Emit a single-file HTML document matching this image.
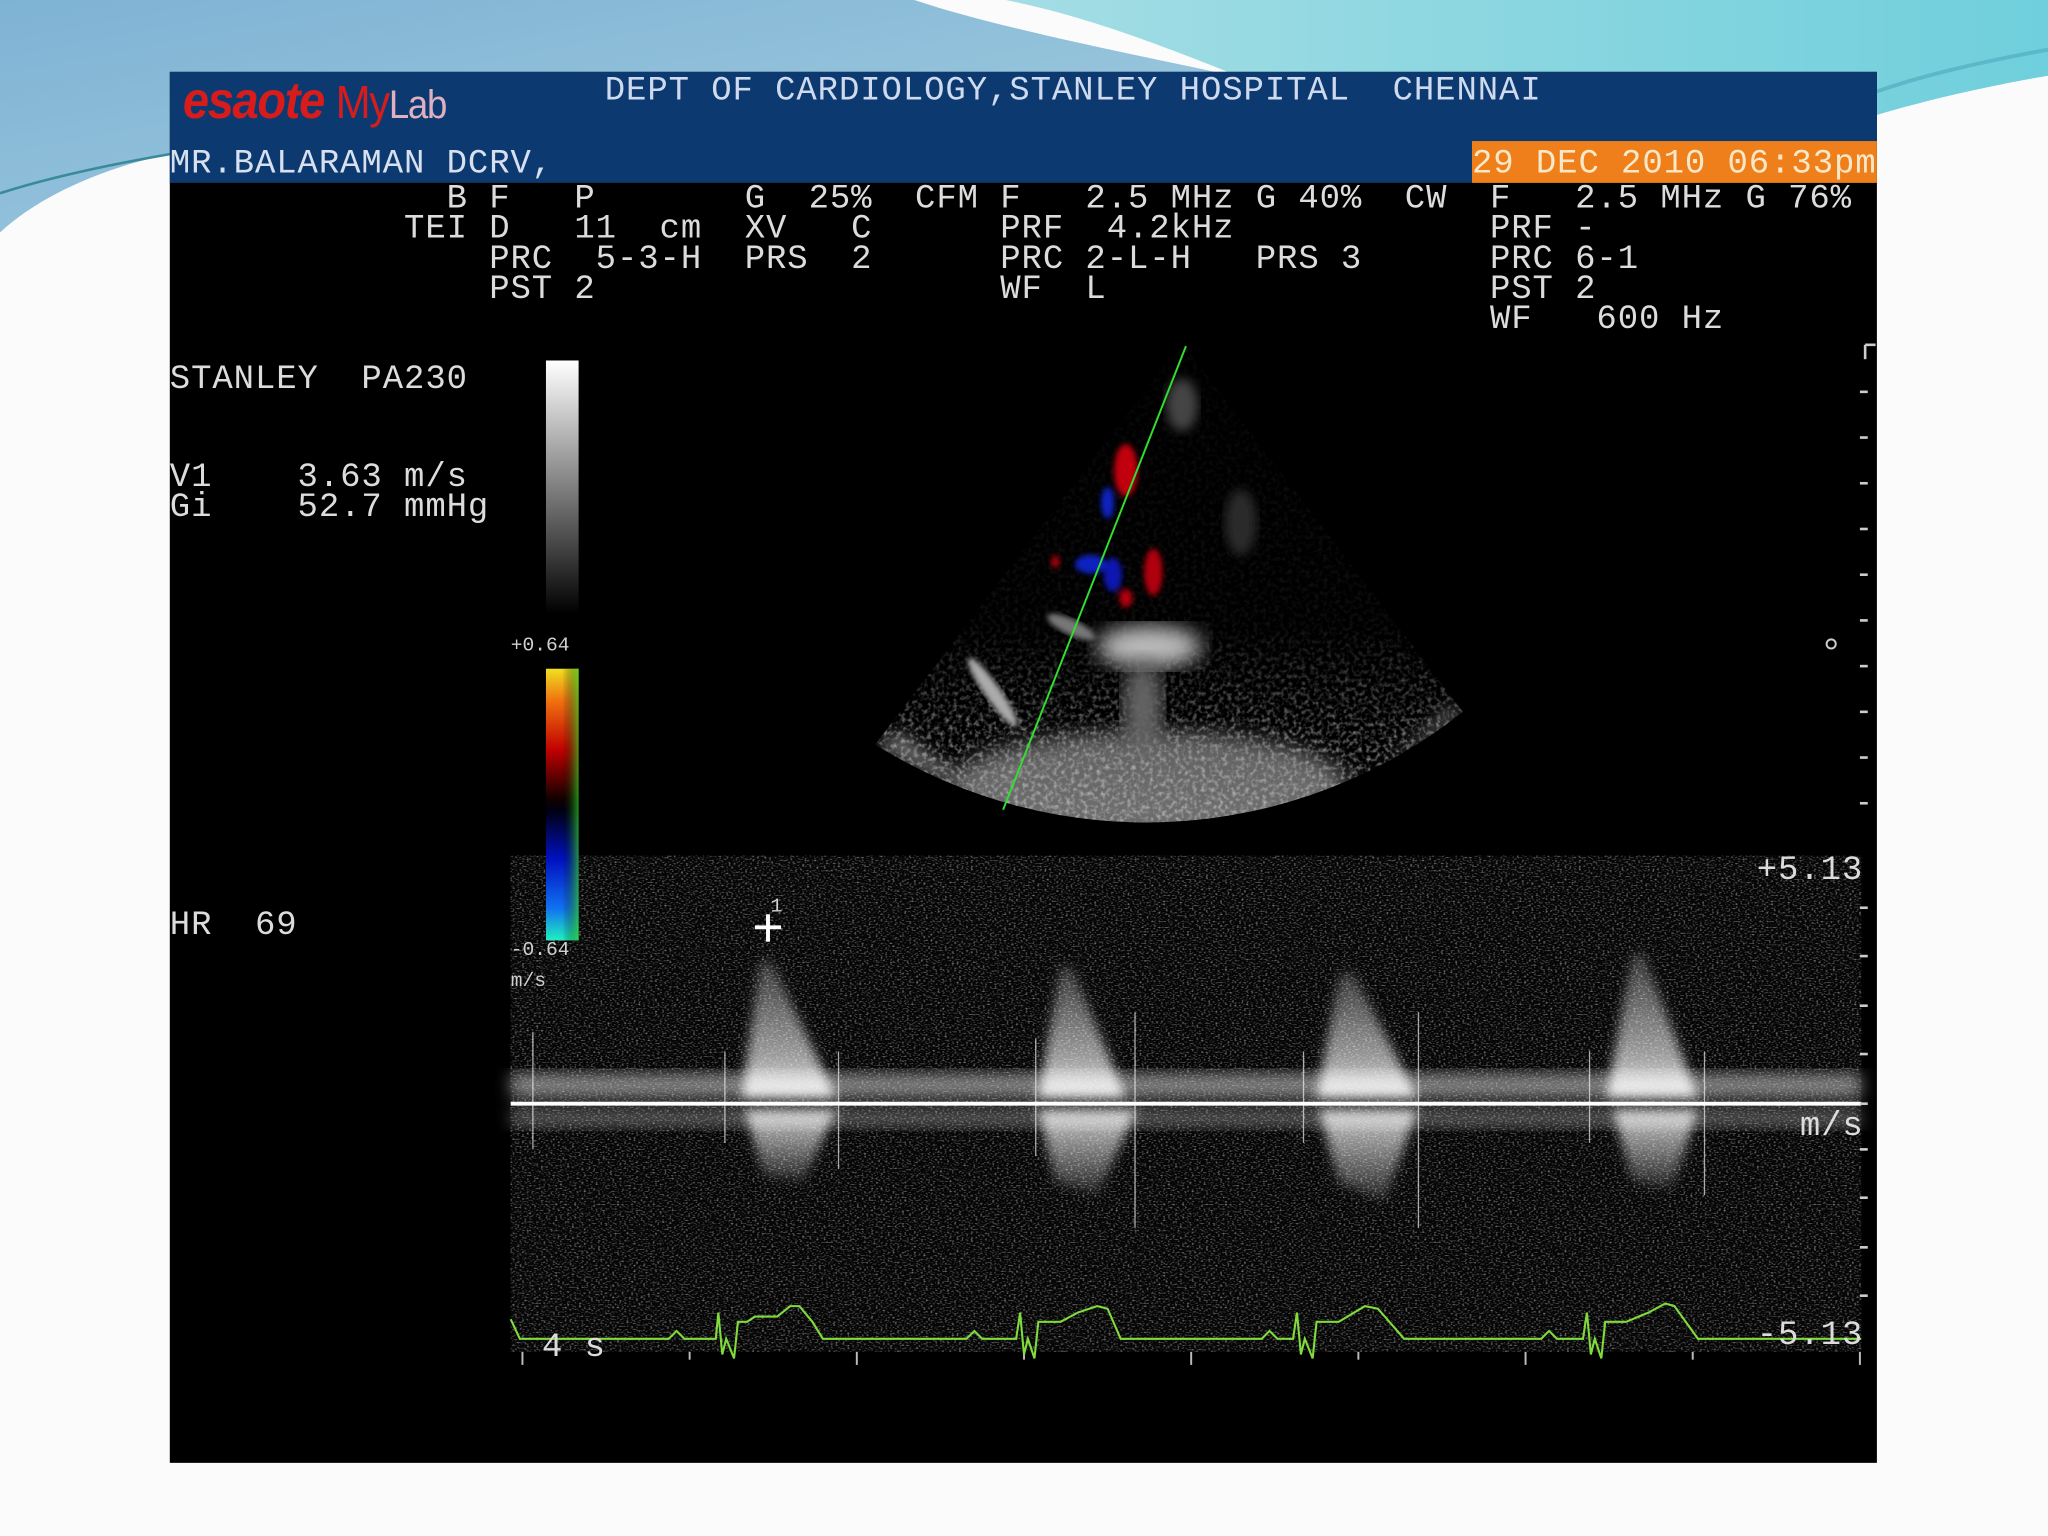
<!DOCTYPE html>
<html><head><meta charset="utf-8">
<style>
html,body{margin:0;padding:0;background:#fbfbfb;overflow:hidden}
#w{position:absolute;left:0;top:0;width:1568px;height:1176px;transform:scale(1.306122);transform-origin:0 0}
.t{position:absolute;font-family:"Liberation Mono",monospace;font-size:26px;letter-spacing:0.7px;color:#dcdcdc;white-space:pre;line-height:23px;margin:0}
.s{position:absolute;font-family:"Liberation Mono",monospace;font-size:15px;color:#d0d0d0;white-space:pre}
</style></head><body>
<div id="w">
<svg width="1568" height="1176" style="position:absolute;left:0;top:0">
<defs>
<linearGradient id="bl" x1="0" y1="0" x2="1" y2="1"><stop offset="0" stop-color="#7fb3d4"/><stop offset="1" stop-color="#a2cde0"/></linearGradient>
<linearGradient id="cy" x1="0" y1="0" x2="1" y2="0"><stop offset="0" stop-color="#a4dde4"/><stop offset="1" stop-color="#6fcfdc"/></linearGradient>
<linearGradient id="gb" x1="0" y1="0" x2="0" y2="1"><stop offset="0" stop-color="#fff"/><stop offset="1" stop-color="#000"/></linearGradient>
<linearGradient id="cb" x1="0" y1="0" x2="0" y2="1">
<stop offset="0" stop-color="#f0e020"/><stop offset="0.12" stop-color="#f07010"/><stop offset="0.3" stop-color="#c00000"/><stop offset="0.48" stop-color="#100000"/><stop offset="0.52" stop-color="#000010"/><stop offset="0.7" stop-color="#0010c0"/><stop offset="0.88" stop-color="#1070f0"/><stop offset="1" stop-color="#20f0c0"/></linearGradient>
<linearGradient id="cbg" x1="0" y1="0" x2="1" y2="0"><stop offset="0.5" stop-color="#000" stop-opacity="0"/><stop offset="1" stop-color="#30d020" stop-opacity="0.7"/></linearGradient>
<filter id="nz" x="0" y="0" width="100%" height="100%">
<feTurbulence type="fractalNoise" baseFrequency="0.55 0.9" numOctaves="1" seed="3"/>
<feColorMatrix type="matrix" values="0 0 0 0 0.75  0 0 0 0 0.75  0 0 0 0 0.75  0 0 0 2.2 -1.1"/>
</filter>
<filter id="nz2" x="0" y="0" width="100%" height="100%">
<feTurbulence type="fractalNoise" baseFrequency="0.3" numOctaves="2" seed="7"/>
<feColorMatrix type="matrix" values="0 0 0 0 0.85  0 0 0 0 0.85  0 0 0 0 0.85  0 0 0 2.5 -1.1"/>
</filter>
<filter id="b4"><feGaussianBlur stdDeviation="4"/></filter>
<filter id="b6"><feGaussianBlur stdDeviation="6"/></filter>
<filter id="b8"><feGaussianBlur stdDeviation="8"/></filter>
<filter id="b2"><feGaussianBlur stdDeviation="2"/></filter>
<clipPath id="sec"><path d="M905,262 L670,570 A390,390 0 0 0 1120,545 Z"/></clipPath>
<linearGradient id="mg" x1="0" y1="0" x2="0" y2="1"><stop offset="0" stop-color="#fff" stop-opacity="0.05"/><stop offset="0.55" stop-color="#fff" stop-opacity="0.12"/><stop offset="0.75" stop-color="#fff" stop-opacity="0.8"/><stop offset="1" stop-color="#fff" stop-opacity="1"/></linearGradient>
<mask id="sm"><rect x="660" y="260" width="470" height="400" fill="url(#mg)"/></mask>
<linearGradient id="pk" x1="0" y1="0" x2="0" y2="1"><stop offset="0" stop-color="#fff" stop-opacity="0.2"/><stop offset="0.7" stop-color="#fff" stop-opacity="0.6"/><stop offset="1" stop-color="#fff" stop-opacity="0.9"/></linearGradient>
<linearGradient id="pkd" x1="0" y1="0" x2="0" y2="1"><stop offset="0" stop-color="#fff" stop-opacity="0.8"/><stop offset="1" stop-color="#fff" stop-opacity="0.1"/></linearGradient>
</defs>
<path d="M0,0 L700,0 C760,20 850,38 930,55 L130,55 L130,118 C80,128 30,150 0,178 Z" fill="url(#bl)"/>
<path d="M770,0 L1568,0 L1568,58 C1520,66 1470,78 1437,88 L1437,55 L940,55 C890,35 830,12 770,0 Z" fill="url(#cy)"/>
<path d="M0,148 C40,135 90,125 130,118" stroke="#3a8a9a" stroke-width="2" fill="none"/>
<path d="M1437,70 C1480,55 1530,45 1568,38" stroke="#5ab8c8" stroke-width="3" fill="none"/>
<rect x="130" y="55" width="1307" height="1065" fill="#000"/>
<rect x="130" y="55" width="1307" height="85" fill="#0c3a70"/>
<rect x="1127" y="108" width="310" height="32" fill="#ef7f1a"/>
<g clip-path="url(#sec)">
<rect x="660" y="260" width="470" height="400" fill="#000"/>
<g mask="url(#sm)">
<path d="M690,560 A300,300 0 0 0 1110,540 L1120,545 A390,390 0 0 1 670,570 Z" fill="#777" filter="url(#b6)"/>
<ellipse cx="880" cy="600" rx="150" ry="40" fill="#777" filter="url(#b8)"/>
<rect x="660" y="260" width="470" height="400" filter="url(#nz2)" opacity="0.6"/>
</g>
<ellipse cx="880" cy="495" rx="40" ry="16" fill="#bbb" filter="url(#b8)"/>
<ellipse cx="875" cy="540" rx="15" ry="35" fill="#666" filter="url(#b8)"/>
<ellipse cx="760" cy="530" rx="6" ry="32" fill="#aaa" transform="rotate(-35 760 530)" filter="url(#b2)"/>
<ellipse cx="820" cy="480" rx="20" ry="6" fill="#777" transform="rotate(25 820 480)" filter="url(#b2)"/>
<ellipse cx="905" cy="310" rx="12" ry="20" fill="#444" filter="url(#b4)"/>
<ellipse cx="950" cy="400" rx="12" ry="25" fill="#2a2a2a" filter="url(#b4)"/>
</g>
<g filter="url(#b2)">
<ellipse cx="862" cy="360" rx="9" ry="20" fill="#c00010"/>
<ellipse cx="848" cy="385" rx="5" ry="12" fill="#1020c0"/>
<ellipse cx="835" cy="432" rx="12" ry="7" fill="#1020c0"/>
<ellipse cx="852" cy="440" rx="7" ry="13" fill="#0818b0"/>
<ellipse cx="883" cy="438" rx="7" ry="18" fill="#b00010"/>
<ellipse cx="862" cy="458" rx="5" ry="7" fill="#b00010"/>
<ellipse cx="808" cy="430" rx="3" ry="5" fill="#b00010"/>
</g>
<line x1="908" y1="265" x2="768" y2="620" stroke="#30e030" stroke-width="1.5"/>
<rect x="391" y="655" width="1034" height="380" fill="#050505"/>
<rect x="391" y="655" width="1034" height="380" filter="url(#nz)" opacity="0.75"/>
<g filter="url(#b6)">
<rect x="391" y="822" width="1034" height="18" fill="#ccc" opacity="0.6"/>
<rect x="391" y="850" width="1034" height="12" fill="#bbb" opacity="0.45"/>
</g>
<g filter="url(#b4)">
<path d="M568,840 L582,735 L590,735 L640,840 Z" fill="url(#pk)"/>
<path d="M570,850 L640,850 L615,905 L585,900 Z" fill="url(#pkd)"/>
<path d="M795,840 L812,740 L820,740 L862,840 Z" fill="url(#pk)"/>
<path d="M795,850 L870,850 L840,915 L808,905 Z" fill="url(#pkd)"/>
<path d="M1008,840 L1026,745 L1036,745 L1085,840 Z" fill="url(#pk)"/>
<path d="M1010,850 L1085,850 L1060,920 L1025,905 Z" fill="url(#pkd)"/>
<path d="M1230,840 L1250,730 L1258,730 L1300,840 Z" fill="url(#pk)"/>
<path d="M1235,850 L1300,850 L1280,910 L1250,905 Z" fill="url(#pkd)"/>
</g>
<g stroke="#eee" stroke-width="1" opacity="0.7">
<line x1="408" y1="790" x2="408" y2="880"/><line x1="555" y1="805" x2="555" y2="875"/><line x1="642" y1="805" x2="642" y2="895"/>
<line x1="793" y1="795" x2="793" y2="885"/><line x1="869" y1="775" x2="869" y2="940"/><line x1="998" y1="805" x2="998" y2="875"/>
<line x1="1086" y1="775" x2="1086" y2="940"/><line x1="1217" y1="805" x2="1217" y2="875"/><line x1="1305" y1="805" x2="1305" y2="915"/>
</g>
<line x1="391" y1="845" x2="1425" y2="845" stroke="#fff" stroke-width="3"/>
<rect x="418" y="276" width="25" height="194" fill="url(#gb)"/>
<rect x="418" y="512" width="25" height="208" fill="url(#cb)"/>
<rect x="418" y="512" width="25" height="208" fill="url(#cbg)"/>
<g stroke="#ccc" stroke-width="2">
<line x1="1424" y1="695" x2="1430" y2="695"/><line x1="1424" y1="732" x2="1430" y2="732"/><line x1="1424" y1="770" x2="1430" y2="770"/><line x1="1424" y1="807" x2="1430" y2="807"/><line x1="1424" y1="845" x2="1430" y2="845"/><line x1="1424" y1="880" x2="1430" y2="880"/><line x1="1424" y1="917" x2="1430" y2="917"/><line x1="1424" y1="955" x2="1430" y2="955"/><line x1="1424" y1="992" x2="1430" y2="992"/>
<line x1="1424" y1="300" x2="1430" y2="300"/><line x1="1424" y1="335" x2="1430" y2="335"/><line x1="1424" y1="370" x2="1430" y2="370"/><line x1="1424" y1="405" x2="1430" y2="405"/><line x1="1424" y1="440" x2="1430" y2="440"/><line x1="1424" y1="475" x2="1430" y2="475"/><line x1="1424" y1="510" x2="1430" y2="510"/><line x1="1424" y1="545" x2="1430" y2="545"/><line x1="1424" y1="580" x2="1430" y2="580"/><line x1="1424" y1="615" x2="1430" y2="615"/>
<line x1="1428" y1="264" x2="1436" y2="264"/><line x1="1428" y1="264" x2="1428" y2="275"/>
</g>
<g stroke="#bbb" stroke-width="1.5">
<line x1="400" y1="1035" x2="400" y2="1045"/><line x1="528" y1="1035" x2="528" y2="1041"/><line x1="656" y1="1035" x2="656" y2="1045"/><line x1="784" y1="1035" x2="784" y2="1041"/><line x1="912" y1="1035" x2="912" y2="1045"/><line x1="1040" y1="1035" x2="1040" y2="1041"/><line x1="1168" y1="1035" x2="1168" y2="1045"/><line x1="1296" y1="1035" x2="1296" y2="1041"/><line x1="1424" y1="1035" x2="1424" y2="1045"/>
</g>
<circle cx="1402" cy="493" r="3.5" fill="none" stroke="#ccc" stroke-width="1.5"/>
<g stroke="#fff" stroke-width="3"><line x1="578" y1="710" x2="598" y2="710"/><line x1="588" y1="700" x2="588" y2="721"/></g>
<polyline fill="none" stroke="#7fdc3a" stroke-width="1.6" points="
391,1010 398,1025 470,1025 500,1025 512,1025 518,1019 524,1025 548,1025 550,1005 553,1037 556,1025 562,1040 565,1012 572,1012 578,1008 595,1008 605,1000 612,1000 622,1012 630,1025
700,1025 740,1025 746,1019 752,1025 778,1025 781,1005 784,1037 787,1025 792,1040 795,1012 812,1012 825,1005 840,1000 848,1002 858,1025
930,1025 966,1025 972,1019 978,1025 990,1025 993,1005 996,1037 999,1025 1005,1040 1008,1012 1025,1012 1045,1000 1055,1002 1075,1025
1150,1025 1180,1025 1186,1019 1192,1025 1212,1025 1215,1005 1218,1037 1221,1025 1226,1040 1229,1012 1245,1012 1262,1005 1275,998 1282,1000 1300,1025 1425,1025"/>
</svg>
<div style="position:absolute;left:140px;top:54px;font-family:'Liberation Sans',sans-serif;font-style:italic;font-weight:bold;color:#d81c1c;font-size:36px;letter-spacing:-1px;transform:scaleY(1.1);transform-origin:0 0">esaote <span style="font-size:32px;font-style:normal;font-weight:normal">My</span><span style="font-size:28px;font-style:normal;font-weight:normal;color:#e0b0c0">Lab</span></div>
<pre class="t" style="left:463px;top:58px;color:#cfdaee">DEPT OF CARDIOLOGY,STANLEY HOSPITAL  CHENNAI</pre>
<pre class="t" style="left:130px;top:114px;color:#d8e0f0">MR.BALARAMAN DCRV,</pre>
<pre class="t" style="left:1127px;top:114px;color:#f8e8c8">29 DEC 2010 06:33pm</pre>
<pre class="t" style="left:130px;top:141px">             B F   P       G  25%  CFM F   2.5 MHz G 40%  CW  F   2.5 MHz G 76%
           TEI D   11  cm  XV   C      PRF  4.2kHz            PRF -
               PRC  5-3-H  PRS  2      PRC 2-L-H   PRS 3      PRC 6-1
               PST 2                   WF  L                  PST 2
                                                              WF   600 Hz</pre>
<pre class="t" style="left:130px;top:279px">STANLEY  PA230</pre>
<pre class="t" style="left:130px;top:354px">V1    3.63 m/s
Gi    52.7 mmHg</pre>
<pre class="t" style="left:130px;top:697px">HR  69</pre>
<pre class="s" style="left:391px;top:486px;margin:0">+0.64</pre>
<pre class="s" style="left:391px;top:719px;margin:0">-0.64</pre>
<pre class="s" style="left:391px;top:743px;margin:0">m/s</pre>
<pre class="s" style="left:590px;top:686px;margin:0">1</pre>
<pre class="t" style="left:1345px;top:655px">+5.13</pre>
<pre class="t" style="left:1378px;top:851px">m/s</pre>
<pre class="t" style="left:1345px;top:1011px">-5.13</pre>
<pre class="t" style="left:415px;top:1020px">4 s</pre>
</div>
</body></html>
